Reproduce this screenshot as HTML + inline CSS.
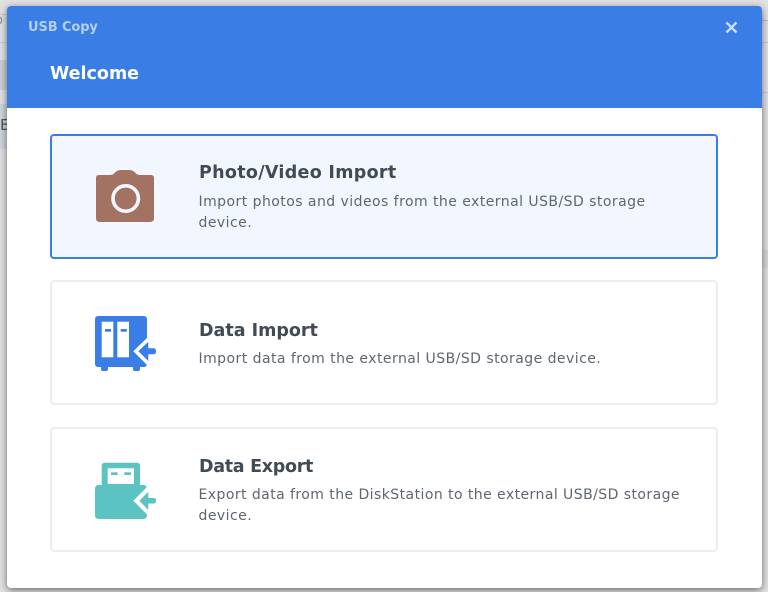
<!DOCTYPE html>
<html><head><meta charset="utf-8"><style>
html,body{margin:0;padding:0;width:768px;height:592px;overflow:hidden;background:#e2e2e3;font-family:"DejaVu Sans",sans-serif}
.abs{position:absolute}
#dlg{position:absolute;left:7px;top:6px;width:755px;height:582px;background:#fff;border-radius:4px;box-shadow:0 2px 8px rgba(0,0,0,.55);overflow:hidden}
#hd{position:absolute;left:0;top:0;width:755px;height:102px;background:#3a7de4}
.card{position:absolute;left:50px;width:668px;box-sizing:border-box;height:125px;background:#fff;border:2px solid #ededee;border-radius:4px}
.t{position:absolute;left:199px;font-size:17.5px;font-weight:bold;color:#414b55;white-space:nowrap;line-height:22px}
.d{position:absolute;left:198.5px;font-size:14px;letter-spacing:.455px;color:#5e6670;white-space:nowrap;line-height:22px}
</style></head><body>
<div class="abs" style="left:0;top:14px;width:7px;height:1px;background:#d0d0d0"></div>
<div class="abs" style="left:0;top:42px;width:7px;height:1px;background:#cfcfcf"></div>
<div class="abs" style="left:0;top:60px;width:7px;height:30px;background:#cfcfd1"></div>
<div class="abs" style="left:0;top:104px;width:7px;height:45px;background:#d0d5de"></div>
<div class="abs" style="left:-5px;top:13px;font-size:13px;color:#8a8a8a;line-height:16px">o</div>
<div class="abs" style="left:0;top:116px;font-size:15px;color:#555;line-height:18px">E</div>
<div class="abs" style="left:762px;top:20px;width:6px;height:1px;background:#bbb"></div>
<div class="abs" style="left:762px;top:42px;width:6px;height:1px;background:#ccc"></div>
<div class="abs" style="left:762px;top:92px;width:6px;height:1px;background:#ccc"></div>
<div class="abs" style="left:762px;top:250px;width:6px;height:18px;background:#d8d8d9"></div>
<div id="dlg"><div id="hd"></div></div>
<div class="abs" style="left:28px;top:19px;font-size:13px;font-weight:bold;color:#b3cff7;line-height:18px;letter-spacing:-.1px">USB Copy</div>
<div class="abs" style="left:50px;top:63px;font-size:17.5px;font-weight:bold;color:#fff;line-height:22px">Welcome</div>
<svg class="abs" style="left:725px;top:21px" width="13" height="13" viewBox="0 0 13 13"><path d="M1.500 1.500L11.500 11.500M11.500 1.500L1.500 11.500" stroke="#c9dcf9" stroke-width="2.400" fill="none"/></svg>

<div class="card" style="top:134px;background:#f2f6fe;border-color:#3a7de4"></div>
<div class="card" style="top:280px"></div>
<div class="card" style="top:427px"></div>

<svg class="abs" style="left:90px;top:165px" width="70" height="62" viewBox="0 0 70 62">
<path d="M9 10H20Q23 10 24.500 8Q27 5 31 5H39Q43 5 45.500 8Q47 10 50 10H61Q64 10 64 13V53Q64 57 60 57H10Q6 57 6 53V13Q6 10 9 10Z" fill="#a27362"/>
<circle cx="35.700" cy="33.500" r="12.700" fill="none" stroke="#f2f6fe" stroke-width="3.600"/>
</svg>

<svg class="abs" style="left:90px;top:310px" width="70" height="65" viewBox="0 0 70 65">
<path d="M11 55h7v4q0 2-2 2h-3q-2 0-2-2zM43 55h7v4q0 2-2 2h-3q-2 0-2-2z" fill="#3a7de4"/>
<rect x="5" y="6" width="52" height="51" rx="3" fill="#3a7de4"/>
<rect x="11.700" y="11.700" width="11.600" height="35.600" fill="#fff"/><rect x="27.300" y="11.700" width="11.700" height="35.600" fill="#fff"/>
<rect x="15" y="19" width="6" height="2.700" fill="#3a7de4"/><rect x="30.700" y="19" width="6" height="2.700" fill="#3a7de4"/>
<path d="M58 27L43.300 41.300L58 56H70V27Z" fill="#fff"/>
<path d="M58.300 31.700L48.300 41.300L58.300 51V44.300H64Q66 44.300 66 41.300Q66 38.300 64 38.300H58.300Z" fill="#3a7de4"/>
</svg>

<svg class="abs" style="left:90px;top:455px" width="70" height="65" viewBox="0 0 70 65">
<path d="M11.700 10.700Q11.700 7.700 14.700 7.700H47Q50 7.700 50 10.700V32H11.700Z" fill="#5bc3c1"/>
<rect x="5" y="30" width="52" height="34" rx="3.500" fill="#5bc3c1"/>
<rect x="17.700" y="13.300" width="26.300" height="15.700" fill="#fff"/>
<rect x="21" y="17.300" width="6.700" height="2.700" fill="#5bc3c1"/><rect x="34.300" y="17.300" width="6.700" height="2.700" fill="#5bc3c1"/>
<path d="M58 31L43.300 45.700L58 60.500H70V31Z" fill="#fff"/>
<path d="M58.300 36.700L49.300 45.700L58.300 55V48.500H64Q66 48.500 66 45.700Q66 43 64 43H58.300Z" fill="#5bc3c1"/>
</svg>

<div class="t" style="top:162px;letter-spacing:.3px">Photo/Video Import</div>
<div class="d" style="top:191px">Import photos and videos from the external USB/SD storage</div>
<div class="d" style="top:212px">device.</div>
<div class="t" style="top:320px">Data Import</div>
<div class="d" style="top:348px">Import data from the external USB/SD storage device.</div>
<div class="t" style="top:456px;letter-spacing:-.3px">Data Export</div>
<div class="d" style="top:484px;letter-spacing:.44px">Export data from the DiskStation to the external USB/SD storage</div>
<div class="d" style="top:505px">device.</div>
</body></html>
